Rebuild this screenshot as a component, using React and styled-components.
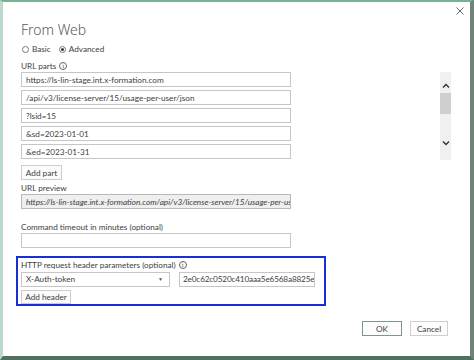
import React from "react";
import styled, { createGlobalStyle } from "styled-components";

const GlobalStyle = createGlobalStyle`
  html, body {
    margin: 0;
    padding: 0;
    background: #ffffff;
  }
  * {
    box-sizing: border-box;
  }
`;

const Frame = styled.div`
  width: 474px;
  height: 360px;
  background: #ffffff;
  border-top: 2px solid #74b394;
  border-left: 3px solid #b9d9cd;
  border-right: 4px solid #6f8379;
  border-bottom: 4px solid #4f725f;
  font-family: Lato, "Noto Sans", sans-serif;
  font-size: 8.2px;
  color: #404040;
  display: flex;
  flex-direction: column;
`;

const TopBar = styled.div`
  height: 18px;
  display: flex;
  justify-content: flex-end;
  align-items: center;
  padding-right: 6px;
`;

const Body = styled.div`
  padding-left: 18px;
  display: flex;
  flex-direction: column;
  flex: 1;
`;

const Title = styled.div`
  font-family: "Noto Sans", sans-serif;
  font-size: 14px;
  font-weight: 300;
  color: #5a5a5a;
  line-height: 18px;
  height: 19px;
  margin-top: 1px;
`;

const RadioRow = styled.div`
  display: flex;
  align-items: center;
  gap: 8px;
  height: 12px;
  margin-top: 3px;
  padding-left: 1px;
`;

const RadioItem = styled.label`
  display: flex;
  align-items: center;
  gap: 3px;
`;

const RadioCircle = styled.span`
  width: 7px;
  height: 7px;
  border-radius: 50%;
  border: 1px solid #7a7a7a;
  display: inline-flex;
  align-items: center;
  justify-content: center;
  &::after {
    content: "";
    width: 3px;
    height: 3px;
    border-radius: 50%;
    background: ${(p) => (p.checked ? "#333" : "transparent")};
  }
`;

const Label = styled.div`
  display: flex;
  align-items: center;
  gap: 3px;
  height: 12px;
  margin-top: ${(p) => p.top || 0}px;
`;

const Info = styled.span`
  width: 8px;
  height: 8px;
  border-radius: 50%;
  border: 1px solid #666;
  font-size: 6px;
  line-height: 6px;
  display: inline-flex;
  justify-content: center;
  color: #555;
  font-family: "DejaVu Serif", serif;
`;

const PartsRow = styled.div`
  display: flex;
  align-items: flex-start;
  padding-right: 19px;
`;

const PartsList = styled.div`
  display: flex;
  flex-direction: column;
  gap: 3px;
  width: 270px;
`;

const Field = styled.div`
  width: ${(p) => p.width || 270}px;
  height: 15px;
  flex-shrink: 0;
  border: 1px solid ${(p) => (p.readOnly ? "#b8b8b8" : "#c6c6c6")};
  background: ${(p) => (p.readOnly ? "#efefef" : "#ffffff")};
  padding: 0 3px 0 4px;
  display: flex;
  align-items: center;
  white-space: nowrap;
  overflow: hidden;
  font-style: ${(p) => (p.readOnly ? "italic" : "normal")};
`;

const TokenField = styled(Field)`
  padding-left: 3px;
  letter-spacing: -0.15px;
`;

const Scrollbar = styled.div`
  margin-left: auto;
  width: 11px;
  height: 88px;
  background: #f0f0f0;
  display: flex;
  flex-direction: column;
  align-items: center;
`;

const Thumb = styled.div`
  width: 11px;
  height: 21px;
  background: #cfcfcf;
  margin-top: 4px;
`;

const Arrow = styled.svg`
  margin-top: ${(p) => p.top || 0}px;
`;

const SmallButton = styled.div`
  height: 15px;
  width: ${(p) => p.width}px;
  margin-top: ${(p) => p.top || 0}px;
  border: 1px solid #cccccc;
  background: #fbfbfb;
  display: flex;
  align-items: center;
  justify-content: center;
`;

const HeaderBox = styled.div`
  margin-top: 8px;
  margin-left: -5px;
  width: 310px;
  height: 50px;
  border: 2px solid #1530d8;
  padding: 1px 0 0 3px;
  display: flex;
  flex-direction: column;
`;

const HeaderRow = styled.div`
  display: flex;
  gap: 9px;
  margin-top: 1px;
`;

const Select = styled(Field)`
  justify-content: space-between;
  padding-right: 6px;
`;

const Caret = styled.span`
  font-size: 5px;
  color: #555;
`;

const Footer = styled.div`
  display: flex;
  justify-content: flex-end;
  gap: 8px;
  margin-top: 15px;
  padding-right: 22px;
`;

const DialogButton = styled.div`
  width: ${(p) => p.width}px;
  height: 15px;
  border: 1px solid ${(p) => (p.primary ? "#7f948a" : "#cfcfcf")};
  background: #fdfdfd;
  display: flex;
  align-items: center;
  justify-content: center;
`;

const parts = [
  "https://ls-lin-stage.int.x-formation.com",
  "/api/v3/license-server/15/usage-per-user/json",
  "?lsid=15",
  "&sd=2023-01-01",
  "&ed=2023-01-31",
];

export default function App() {
  return (
    <>
      <GlobalStyle />
      <Frame>
        <TopBar>
          <svg width="8" height="8" viewBox="0 0 8 8">
            <path d="M0.5 0.5L7.5 7.5M7.5 0.5L0.5 7.5" stroke="#555" strokeWidth="0.9" />
          </svg>
        </TopBar>
        <Body>
          <Title>From Web</Title>
          <RadioRow>
            <RadioItem>
              <RadioCircle />
              Basic
            </RadioItem>
            <RadioItem>
              <RadioCircle checked />
              Advanced
            </RadioItem>
          </RadioRow>
          <Label top={5}>
            URL parts <Info>i</Info>
          </Label>
          <PartsRow>
            <PartsList>
              {parts.map((p) => (
                <Field key={p}>{p}</Field>
              ))}
            </PartsList>
            <Scrollbar>
              <Arrow width="8" height="6" viewBox="0 0 8 6" top={11}>
                <path d="M1 4.5L4 1.5L7 4.5" fill="none" stroke="#333" strokeWidth="1.4" />
              </Arrow>
              <Thumb />
              <Arrow width="8" height="6" viewBox="0 0 8 6" top={26}>
                <path d="M1 1.5L4 4.5L7 1.5" fill="none" stroke="#333" strokeWidth="1.4" />
              </Arrow>
            </Scrollbar>
          </PartsRow>
          <SmallButton width={41} top={5}>
            Add part
          </SmallButton>
          <Label top={2}>URL preview</Label>
          <Field readOnly>
            https://ls-lin-stage.int.x-formation.com/api/v3/license-server/15/usage-per-user/json?lsid=15
          </Field>
          <Label top={12}>Command timeout in minutes (optional)</Label>
          <Field />
          <HeaderBox>
            <Label>
              HTTP request header parameters (optional) <Info>i</Info>
            </Label>
            <HeaderRow>
              <Select width={149}>
                X-Auth-token <Caret>▼</Caret>
              </Select>
              <TokenField width={136}>2e0c62c0520c410aaa5e6568a8825e6</TokenField>
            </HeaderRow>
            <SmallButton width={50} top={3}>
              Add header
            </SmallButton>
          </HeaderBox>
          <Footer>
            <DialogButton width={40} primary>
              OK
            </DialogButton>
            <DialogButton width={38}>Cancel</DialogButton>
          </Footer>
        </Body>
      </Frame>
    </>
  );
}
